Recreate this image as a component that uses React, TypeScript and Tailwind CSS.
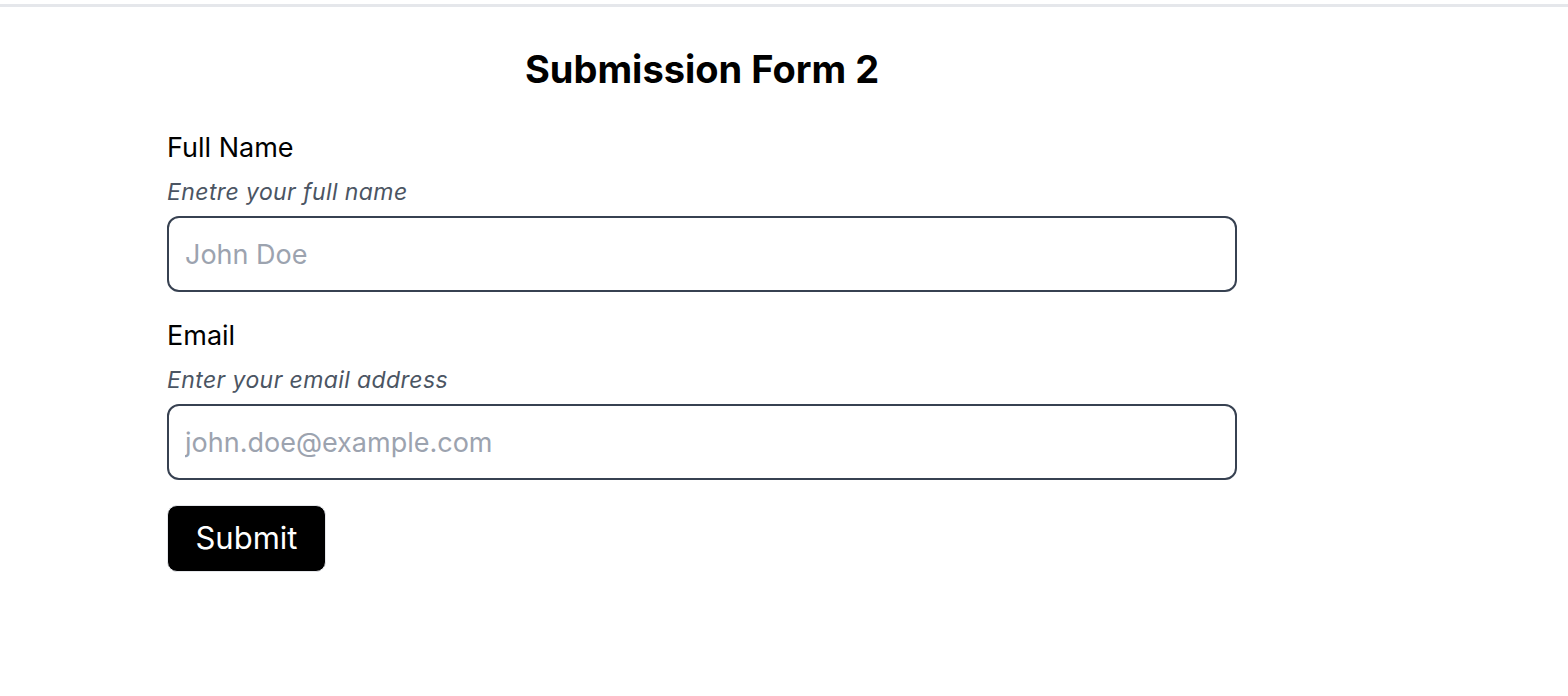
import React from "react";

export default function App() {
  return (
    <div className="min-h-screen bg-white" style={{ fontFamily: "Inter, 'Noto Sans', sans-serif" }}>
      <div className="pt-1">
        <div className="h-[3px] bg-[#e5e7eb]" />
      </div>
      <div className="ml-[167px] w-[1070px] pt-[39px]">
        <h1 className="text-center text-[38px] leading-[46px] font-bold text-black">Submission Form 2</h1>
        <form className="mt-[39px] flex flex-col" onSubmit={(e) => e.preventDefault()}>
          <div className="flex flex-col">
            <label className="text-[27px] leading-[34px] text-black">Full Name</label>
            <p className="mt-[12px] text-[23px] leading-[30px] tracking-[0.4px] italic text-[#4b5563]">Enetre your full name</p>
            <input
              type="text"
              placeholder="John Doe"
              className="mt-[9px] h-[76px] w-full rounded-[12px] border-2 border-[#374151] px-[16px] text-[27px] text-black placeholder:text-[#9ca3af] outline-none"
            />
          </div>
          <div className="mt-[27px] flex flex-col">
            <label className="text-[27px] leading-[34px] text-black">Email</label>
            <p className="mt-[12px] text-[23px] leading-[30px] tracking-[0.4px] italic text-[#4b5563]">Enter your email address</p>
            <input
              type="email"
              placeholder="john.doe@example.com"
              className="mt-[9px] h-[76px] w-full rounded-[12px] border-2 border-[#374151] px-[16px] text-[27px] text-black placeholder:text-[#9ca3af] outline-none"
            />
          </div>
          <div className="mt-[25px]">
            <button
              type="submit"
              className="h-[67px] w-[159px] rounded-[10px] border border-[#e5e7eb] bg-black text-[31px] text-white"
            >
              Submit
            </button>
          </div>
        </form>
      </div>
    </div>
  );
}
